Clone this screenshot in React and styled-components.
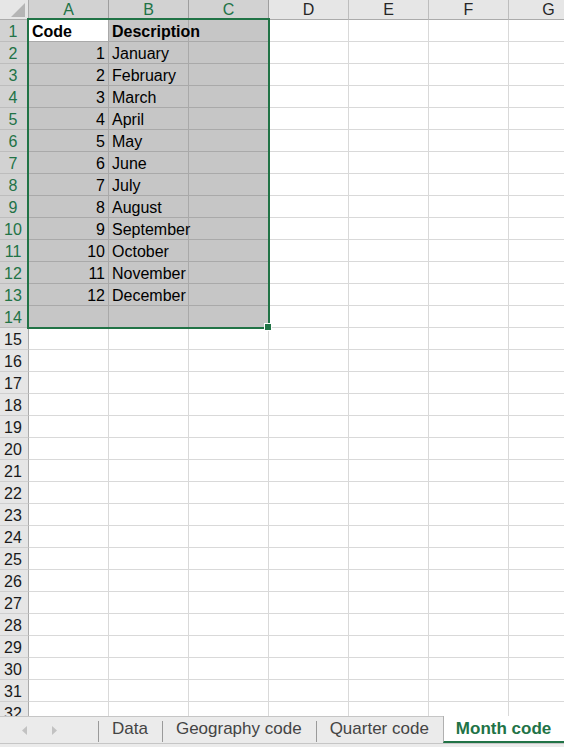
import React from 'react';
import styled, { createGlobalStyle } from 'styled-components';

const GREEN = '#217346';

const Global = createGlobalStyle`
  html, body { margin: 0; padding: 0; background: #fff; }
  body { font-family: "Liberation Sans", Arial, sans-serif; }
`;

const Sheet = styled.div`
  width: 564px;
  height: 747px;
  display: flex;
  flex-direction: column;
  overflow: hidden;
  background: #fff;
`;

const Viewport = styled.div`
  position: relative;
  height: 716px;
  flex: none;
  overflow: hidden;
`;

const Grid = styled.div`
  display: grid;
  grid-template-columns: 29px repeat(7, 80px);
  grid-template-rows: 20px;
  grid-auto-rows: 22px;
  width: 589px;
`;

const Corner = styled.div`
  box-sizing: border-box;
  background: #e6e6e6;
  border-right: 1px solid #ababab;
  border-bottom: 1px solid #ababab;
  display: flex;
  align-items: flex-end;
  justify-content: flex-end;
  padding: 0 3px 2px 0;
`;

const ColHeader = styled.div`
  box-sizing: border-box;
  background: ${p => (p.$sel ? '#d2d2d2' : '#e6e6e6')};
  color: ${p => (p.$sel ? GREEN : '#262626')};
  border-right: 1px solid ${p => (p.$sel ? '#9e9e9e' : '#bdbdbd')};
  border-bottom: 1px solid #ababab;
  font-size: 16px;
  line-height: 20px;
  text-align: center;
`;

const RowHeader = styled.div`
  box-sizing: border-box;
  background: ${p => (p.$sel ? '#d2d2d2' : '#e6e6e6')};
  color: ${p => (p.$sel ? GREEN : '#1a1a1a')};
  border-right: 1px solid #ababab;
  border-bottom: 1px solid ${p => (p.$sel ? '#bdbdbd' : '#cfcfcf')};
  font-size: 16px;
  line-height: 23px;
  text-align: center;
  padding-right: 2px;
`;

const Cell = styled.div`
  box-sizing: border-box;
  background: ${p => (p.$active ? '#fff' : p.$sel ? '#c6c6c6' : '#fff')};
  border-right: 1px solid ${p => (p.$sel ? '#a9a9a9' : '#d9d9d9')};
  border-bottom: 1px solid ${p => (p.$sel ? '#a9a9a9' : '#d9d9d9')};
  display: flex;
  justify-content: ${p => (p.$align === 'right' ? 'flex-end' : 'flex-start')};
  padding: 0 3px 0 3px;
  white-space: nowrap;
  overflow: visible;
  font-size: 16px;
  font-weight: ${p => (p.$bold ? 700 : 400)};
  line-height: 23px;
  color: #000;
`;

const CellText = styled.span`
  position: relative;
  z-index: 1;
`;

const SelectionBox = styled.div`
  position: absolute;
  left: 27px;
  top: 18px;
  width: 243px;
  height: 311px;
  box-sizing: border-box;
  border: 2px solid ${GREEN};
  pointer-events: none;
  z-index: 2;
`;

const FillHandle = styled.div`
  position: absolute;
  left: 265px;
  top: 324px;
  width: 6px;
  height: 6px;
  background: ${GREEN};
  box-shadow: 0 0 0 1px #fff;
  z-index: 3;
`;

const TabBar = styled.div`
  flex: 1;
  display: flex;
  flex-direction: column;
  background: #ebebeb;
  border-top: 1px solid #c6c6c6;
`;

const TabStrip = styled.div`
  display: flex;
  align-items: stretch;
  height: 26px;
`;

const NavArea = styled.div`
  width: 98px;
  display: flex;
  align-items: center;
  padding-left: 22px;
  gap: 25px;
  box-sizing: border-box;
`;

const Sep = styled.div`
  width: 1px;
  background: #9a9a9a;
  margin: 4px 0 1px;
`;

const Tab = styled.div`
  padding: 0 14px 0 13px;
  font-size: 17px;
  line-height: 24px;
  color: #444;
  white-space: nowrap;
`;

const ActiveTab = styled.div`
  margin-top: -1px;
  flex: 1;
  background: #fff;
  border-left: 1px solid #b0b0b0;
  border-bottom: 2px solid ${GREEN};
  padding-left: 12px;
  font-size: 17px;
  font-weight: 700;
  line-height: 25px;
  color: ${GREEN};
  white-space: nowrap;
`;

const BottomEdge = styled.div`
  border-top: 1px solid #c6c6c6;
  flex: 1;
`;

const months = [
  'January', 'February', 'March', 'April', 'May', 'June',
  'July', 'August', 'September', 'October', 'November', 'December',
];
const cols = ['A', 'B', 'C', 'D', 'E', 'F', 'G'];

function cellValue(r, c) {
  if (r === 1) {
    if (c === 0) return 'Code';
    if (c === 1) return 'Description';
    return '';
  }
  if (r >= 2 && r <= 13) {
    if (c === 0) return String(r - 1);
    if (c === 1) return months[r - 2];
  }
  return '';
}

const Arrow = ({ dir }) => (
  <svg width="5" height="9" viewBox="0 0 5 9">
    {dir === 'left' ? (
      <path d="M5 0 L0 4.5 L5 9 Z" fill="#c2c2c2" />
    ) : (
      <path d="M0 0 L5 4.5 L0 9 Z" fill="#c2c2c2" />
    )}
  </svg>
);

export default function App() {
  const rows = Array.from({ length: 32 }, (_, i) => i + 1);
  return (
    <>
      <Global />
      <Sheet>
        <Viewport>
          <Grid>
            <Corner>
              <svg width="14" height="14" viewBox="0 0 14 14">
                <path d="M14 0 L14 14 L0 14 Z" fill="#b5b5b5" />
              </svg>
            </Corner>
            {cols.map((c, i) => (
              <ColHeader key={c} $sel={i < 3}>{c}</ColHeader>
            ))}
            {rows.map(r => (
              <React.Fragment key={r}>
                <RowHeader $sel={r <= 14}>{r}</RowHeader>
                {cols.map((c, ci) => {
                  const v = cellValue(r, ci);
                  const sel = r <= 14 && ci < 3;
                  const isNum = ci === 0 && r >= 2 && r <= 13;
                  return (
                    <Cell
                      key={c}
                      $sel={sel}
                      $active={r === 1 && ci === 0}
                      $align={isNum ? 'right' : 'left'}
                      $bold={r === 1}
                    >
                      {v && <CellText>{v}</CellText>}
                    </Cell>
                  );
                })}
              </React.Fragment>
            ))}
          </Grid>
          <SelectionBox />
          <FillHandle />
        </Viewport>
        <TabBar>
          <TabStrip>
            <NavArea>
              <Arrow dir="left" />
              <Arrow dir="right" />
            </NavArea>
            <Sep />
            <Tab>Data</Tab>
            <Sep />
            <Tab>Geography code</Tab>
            <Sep />
            <Tab>Quarter code</Tab>
            <ActiveTab>Month code</ActiveTab>
          </TabStrip>
          <BottomEdge />
        </TabBar>
      </Sheet>
    </>
  );
}
